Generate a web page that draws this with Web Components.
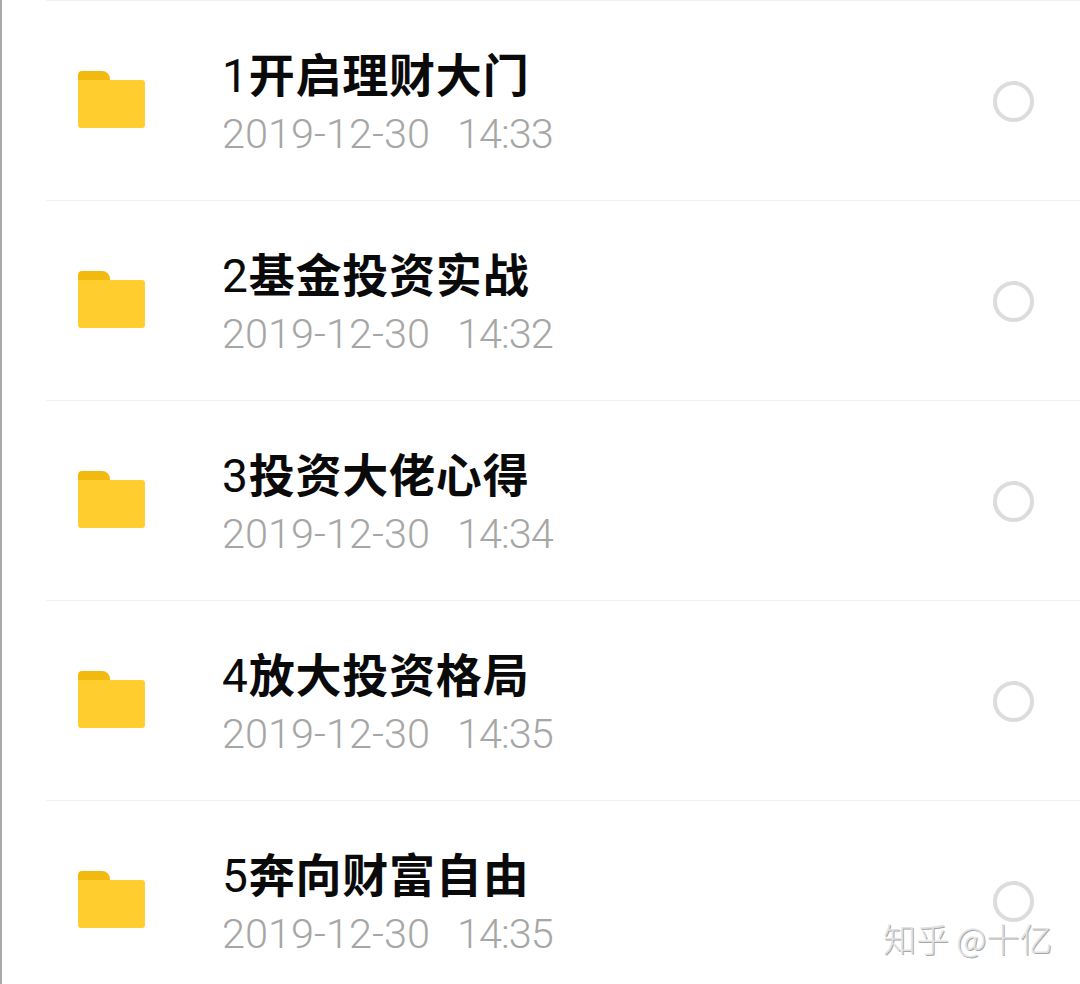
<!DOCTYPE html>
<html lang="zh">
<head>
<meta charset="utf-8">
<title>文件列表</title>
<style>
  html, body { margin: 0; padding: 0; background: #fff; }
</style>
</head>
<body>
<file-list>
  <file-row index="1" name="开启理财大门" time="14:33"></file-row>
  <file-row index="2" name="基金投资实战" time="14:32"></file-row>
  <file-row index="3" name="投资大佬心得" time="14:34"></file-row>
  <file-row index="4" name="放大投资格局" time="14:35"></file-row>
  <file-row index="5" name="奔向财富自由" time="14:35"></file-row>
</file-list>
<script>
class FileList extends HTMLElement {
    constructor() {
        super();
        this.attachShadow({ mode: "open" });
        this.shadowRoot.innerHTML = `
      <style>
        :host {
          display: block;
          position: relative;
          height: 984px;
          overflow: hidden;
          box-sizing: border-box;
          border-left: 2px solid #a9a9a9;
          background: #fff;
        }
        .mark {
          position: absolute;
          left: 881px;
          top: 920px;
          font: 300 33px/36px "Noto Sans CJK SC", "Noto Sans", sans-serif;
          color: #e2e2e2;
          text-shadow: 1px 1px 0 #a8a8a8;
          white-space: pre;
        }
      </style>
      <slot></slot>
      <div class="mark">知乎 @十亿</div>
    `;
    }
}

class FileRow extends HTMLElement {
    constructor() {
        super();
        this.attachShadow({ mode: "open" });
    }

    connectedCallback() {
        const index = this.getAttribute('index') || '';
        const name = this.getAttribute('name') || '';
        const time = this.getAttribute('time') || '';
        this.shadowRoot.innerHTML = `
      <style>
        :host {
          display: flex;
          align-items: center;
          height: 200px;
          box-sizing: border-box;
          padding: 0 46px 0 74px;
          position: relative;
        }
        :host::before {
          content: "";
          position: absolute;
          left: 44px;
          right: 0;
          top: 0;
          height: 1px;
          background: #f2f2f2;
        }
        svg { width: 70px; height: 60px; flex: none; display: block; margin-top: -2px; filter: blur(0.5px); }
        .text { flex: 1; margin-left: 76px; padding-top: 1px; }
        .name {
          font: 700 46px/54px "Noto Sans CJK SC", sans-serif;
          letter-spacing: 0.8px;
          color: #0a0a0a;
          white-space: nowrap;
        }
        .num { font: 400 46px/54px Roboto, sans-serif; }
        .date {
          margin-top: 8px;
          font: 300 41.5px/46px Roboto, "Noto Sans", sans-serif;
          color: #a6a6a6;
          white-space: nowrap;
        }
        .time { margin-left: 27px; letter-spacing: -1px; }
        .radio {
          width: 33px;
          height: 33px;
          flex: none;
          border: 4px solid #dcdcdc;
          border-radius: 50%;
          margin-top: 2px;
          filter: blur(0.7px);
        }
      </style>
      <svg viewBox="0 0 70 60">
        <path d="M2 12V6a4 4 0 0 1 4-4h20a8 8 0 0 1 8 8v4H2z" fill="#f2b90f"/>
        <path d="M2 11h64a3 3 0 0 1 3 3v42a3 3 0 0 1-3 3H5a3 3 0 0 1-3-3z" fill="#ffce2e"/>
      </svg>
      <div class="text">
        <div class="name"><span class="num">${index}</span>${name}</div>
        <div class="date"><span>2019-12-30</span><span class="time">${time}</span></div>
      </div>
      <div class="radio"></div>
    `;
    }
}

customElements.define("file-list", FileList);
customElements.define("file-row", FileRow);
</script>
</body>
</html>
